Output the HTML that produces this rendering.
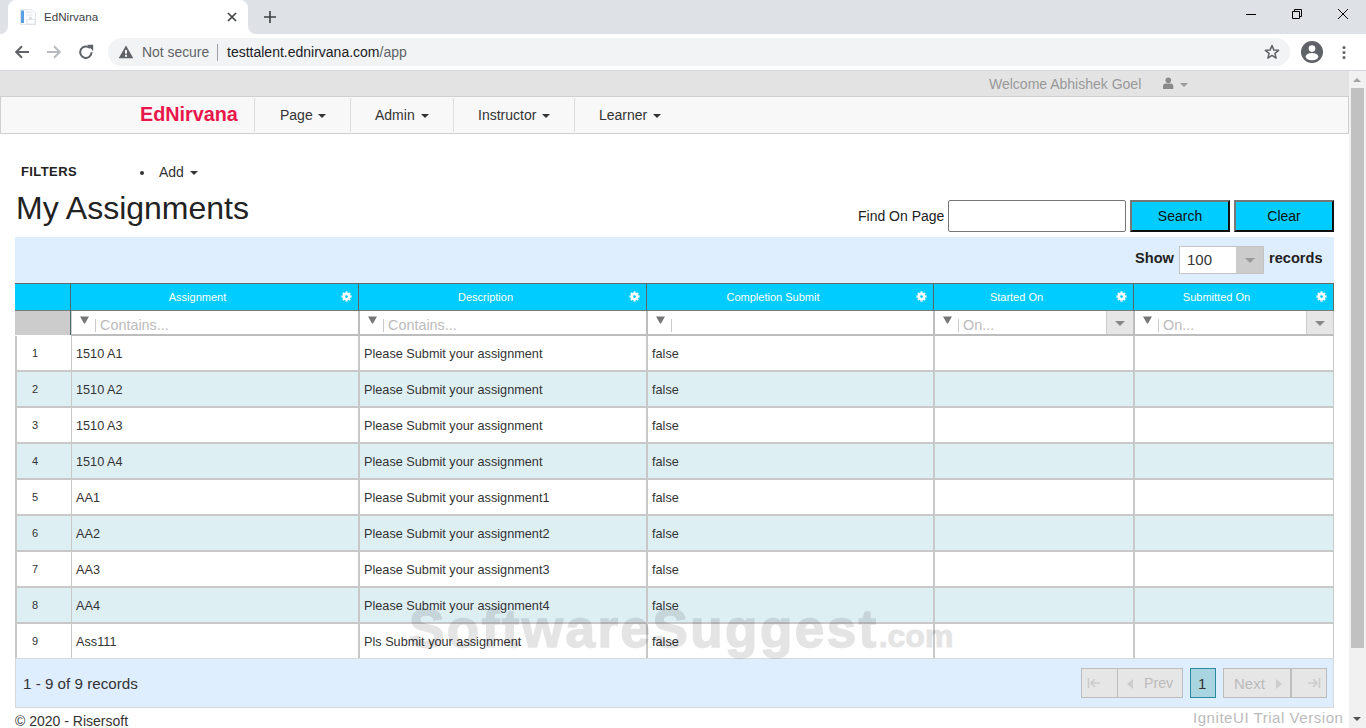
<!DOCTYPE html>
<html><head><meta charset="utf-8">
<style>
*{box-sizing:border-box;margin:0;padding:0}
html,body{width:1366px;height:728px;overflow:hidden;background:#fff;font-family:"Liberation Sans",sans-serif;position:relative}
.a{position:absolute}
.t{position:absolute;white-space:nowrap;line-height:1}
#tabstrip{left:0;top:0;width:1366px;height:34px;background:#DEE1E6}
#tab{left:8px;top:0;width:240px;height:34px;background:#fff;border-radius:8px 8px 0 0}
#toolbar{left:0;top:34px;width:1366px;height:36px;background:#fff}
#omni{left:108px;top:38px;width:1182px;height:28px;background:#F1F3F4;border-radius:14px}
</style></head>
<body>
<!-- Chrome UI -->
<div id="tabstrip" class="a"></div>
<div id="tab" class="a"></div>
<svg class="a" style="left:248px;top:26px" width="8" height="8"><path d="M0 0 V8 H8 A8 8 0 0 1 0 0Z" fill="#fff"/></svg>
<svg class="a" style="left:0px;top:26px" width="8" height="8"><path d="M8 0 V8 H0 A8 8 0 0 0 8 0Z" fill="#fff"/></svg>
<!-- favicon -->
<svg class="a" style="left:20px;top:9px" width="16" height="16" viewBox="0 0 16 16">
<path d="M0.5 0.5H12L15.5 4V15.5H0.5Z" fill="#fbfcfd" stroke="#dde1e5" stroke-width="0.8"/>
<rect x="1" y="1.5" width="3" height="12.5" fill="#5b9fe3"/>
<rect x="5.5" y="2.5" width="6" height="1.2" fill="#dfe8e8"/><rect x="6" y="5.5" width="6" height="1" fill="#e3e7ea"/><rect x="9" y="8.5" width="3" height="1" fill="#bfc4c8"/><rect x="7" y="10.5" width="8" height="4.5" fill="#fff" stroke="#d5dade" stroke-width="0.7"/>
</svg>
<div class="t" style="left:44px;top:11px;font-size:11.6px;color:#3c4043">EdNirvana</div>
<svg class="a" style="left:227px;top:12px" width="10" height="10" viewBox="0 0 10 10"><path d="M1 1L9 9M9 1L1 9" stroke="#3c4043" stroke-width="1.6"/></svg>
<svg class="a" style="left:264px;top:11px" width="12" height="12" viewBox="0 0 12 12"><path d="M6 0V12M0 6H12" stroke="#3c4043" stroke-width="1.6"/></svg>
<!-- window controls -->
<svg class="a" style="left:1246px;top:9px" width="11" height="11" viewBox="0 0 11 11"><path d="M0 5.5H10" stroke="#000" stroke-width="1"/></svg>
<svg class="a" style="left:1291px;top:8px" width="12" height="12" viewBox="0 0 12 12"><path d="M1.5 3.5H8.5V10.5H1.5Z M3.5 3.5V1.5H10.5V8.5H8.5" fill="none" stroke="#000" stroke-width="1"/></svg>
<svg class="a" style="left:1337px;top:8px" width="12" height="12" viewBox="0 0 12 12"><path d="M1 1L11 11M11 1L1 11" stroke="#000" stroke-width="1"/></svg>
<div id="toolbar" class="a"></div>
<!-- nav icons -->
<svg class="a" style="left:14px;top:44px" width="16" height="16" viewBox="0 0 16 16"><path d="M15 8H2.5M8 2.2L2.2 8L8 13.8" fill="none" stroke="#5f6368" stroke-width="2"/></svg>
<svg class="a" style="left:46px;top:44px" width="16" height="16" viewBox="0 0 16 16"><path d="M1 8H13.5M8 2.2L13.8 8L8 13.8" fill="none" stroke="#b9bbbe" stroke-width="2"/></svg>
<svg class="a" style="left:78px;top:44px" width="16" height="16" viewBox="0 0 16 16"><path d="M13.6 8.2A5.7 5.7 0 1 1 11.9 4.1" fill="none" stroke="#5f6368" stroke-width="2"/><path d="M9 0.8H15.2V7Z" fill="#5f6368"/></svg>
<div id="omni" class="a"></div>
<svg class="a" style="left:118px;top:45px" width="16" height="14" viewBox="0 0 16 14"><path d="M8 0.5L15.3 13.3H0.7Z" fill="#5f6368"/><rect x="7" y="5" width="2" height="3.6" fill="#f1f3f4"/><rect x="7" y="9.8" width="2" height="2" fill="#f1f3f4"/></svg>
<div class="t" style="left:142px;top:46px;font-size:13.9px;color:#5f6368">Not secure</div>
<div class="a" style="left:217px;top:44px;width:1px;height:17px;background:#9aa0a6"></div>
<div class="t" style="left:227px;top:45px;font-size:14px;color:#202124">testtalent.ednirvana.com<span style="color:#5f6368">/app</span></div>
<svg class="a" style="left:1264px;top:44px" width="16" height="16" viewBox="0 0 16 16"><path d="M8 1.5L9.9 6.1L14.6 6.3L10.9 9.3L12.1 14.1L8 11.4L3.9 14.1L5.1 9.3L1.4 6.3L6.1 6.1Z" fill="none" stroke="#5f6368" stroke-width="1.5" stroke-linejoin="round"/></svg>
<svg class="a" style="left:1301px;top:41px" width="22" height="22" viewBox="0 0 22 22"><circle cx="11" cy="11" r="11" fill="#5f6368"/><circle cx="11" cy="7.6" r="3.3" fill="#fff"/><ellipse cx="11" cy="15.6" rx="6.4" ry="3.6" fill="#fff"/></svg>
<svg class="a" style="left:1341px;top:44px" width="6" height="16" viewBox="0 0 6 16"><circle cx="3" cy="3.5" r="1.5" fill="#5f6368"/><circle cx="3" cy="8.5" r="1.5" fill="#5f6368"/><circle cx="3" cy="13.5" r="1.5" fill="#5f6368"/></svg>
<div class="a" style="left:0;top:70px;width:1366px;height:1px;background:#d4d7dc"></div>
<!-- Page -->
<div class="a" style="left:0;top:71px;width:1349px;height:25px;background:#E3E3E3"></div>
<div class="t" style="left:989px;top:77px;font-size:14px;color:#999">Welcome Abhishek Goel</div>
<svg class="a" style="left:1162px;top:77px" width="12" height="12" viewBox="0 0 12 12"><circle cx="6.3" cy="3.3" r="2.8" fill="#8a8a8a"/><path d="M1 12V9.3C1 7.5 2.2 6.6 3.6 6.6H8.8C10.2 6.6 11.3 7.5 11.3 9.3V12Z" fill="#8a8a8a"/></svg>
<div class="a" style="left:1180px;top:83px;width:0;height:0;border-left:4px solid transparent;border-right:4px solid transparent;border-top:4px solid #999"></div>
<!-- navbar -->
<div class="a" style="left:0;top:96px;width:1349px;height:38px;background:#F8F8F8;border:1px solid #cfcfcf"></div>
<div class="t" style="left:140px;top:105px;font-size:19.8px;font-weight:bold;color:#E8174B">EdNirvana</div>
<div class="a" style="left:254px;top:98px;width:1px;height:34px;background:#ddd"></div>
<div class="a" style="left:350px;top:98px;width:1px;height:34px;background:#ddd"></div>
<div class="a" style="left:453px;top:98px;width:1px;height:34px;background:#ddd"></div>
<div class="a" style="left:574px;top:98px;width:1px;height:34px;background:#ddd"></div>
<div class="t" style="left:280px;top:108px;font-size:14px;color:#333">Page</div>
<div class="a" style="left:318px;top:114px;border-left:4px solid transparent;border-right:4px solid transparent;border-top:4px solid #333"></div>
<div class="t" style="left:375px;top:108px;font-size:14px;color:#333">Admin</div>
<div class="a" style="left:421px;top:114px;border-left:4px solid transparent;border-right:4px solid transparent;border-top:4px solid #333"></div>
<div class="t" style="left:478px;top:108px;font-size:14px;color:#333">Instructor</div>
<div class="a" style="left:542px;top:114px;border-left:4px solid transparent;border-right:4px solid transparent;border-top:4px solid #333"></div>
<div class="t" style="left:599px;top:108px;font-size:14px;color:#333">Learner</div>
<div class="a" style="left:653px;top:114px;border-left:4px solid transparent;border-right:4px solid transparent;border-top:4px solid #333"></div>
<!-- filters -->
<div class="t" style="left:21px;top:165px;font-size:13px;font-weight:bold;color:#222;letter-spacing:0.4px">FILTERS</div>
<div class="a" style="left:140px;top:171px;width:4px;height:4px;border-radius:50%;background:#333"></div>
<div class="t" style="left:159px;top:165px;font-size:14px;color:#333">Add</div>
<div class="a" style="left:190px;top:171px;border-left:4px solid transparent;border-right:4px solid transparent;border-top:4px solid #333"></div>
<div class="t" style="left:16px;top:192px;font-size:32px;color:#222">My Assignments</div>
<div class="t" style="left:858px;top:209px;font-size:14px;color:#222">Find On Page</div>
<div class="a" style="left:948px;top:200px;width:178px;height:32px;border:1px solid #767676;border-radius:2px;background:#fff"></div>
<div class="a" style="left:1130px;top:200px;width:100px;height:32px;background:#00CCFF;border:2px solid;border-color:#767676 #111 #111 #767676"></div>
<div class="t" style="left:1130px;top:209px;width:100px;text-align:center;font-size:14px;color:#111">Search</div>
<div class="a" style="left:1234px;top:200px;width:100px;height:32px;background:#00CCFF;border:2px solid;border-color:#767676 #111 #111 #767676"></div>
<div class="t" style="left:1234px;top:209px;width:100px;text-align:center;font-size:14px;color:#111">Clear</div>
<div class="a" style="left:15px;top:237px;width:1319px;height:46px;background:#DFEEFE"></div>
<div class="t" style="left:1135px;top:251px;font-size:14.6px;font-weight:bold;color:#222">Show</div>
<div class="a" style="left:1179px;top:246px;width:85px;height:28px;background:#fff;border:1px solid #c4c4c4"></div>
<div class="a" style="left:1236px;top:247px;width:27px;height:26px;background:#cccccc"></div>
<div class="a" style="left:1245px;top:258px;border-left:5px solid transparent;border-right:5px solid transparent;border-top:5px solid #999"></div>
<div class="t" style="left:1187px;top:252px;font-size:15px;color:#333">100</div>
<div class="t" style="left:1269px;top:251px;font-size:14.6px;font-weight:bold;color:#222">records</div>
<div class="a" style="left:15px;top:283px;width:1319px;height:1px;background:#6a6a6a"></div>
<div class="a" style="left:15px;top:284px;width:1319px;height:26px;background:#00CCFF"></div>
<div class="a" style="left:15px;top:310px;width:1319px;height:1px;background:#7a7a7a"></div>
<div class="a" style="left:15px;top:311px;width:55px;height:24px;background:#cccccc"></div>
<div class="a" style="left:71px;top:311px;width:1263px;height:23px;background:#fff"></div>
<div class="a" style="left:71px;top:334px;width:1263px;height:2px;background:#bdbdbd"></div>
<div class="a" style="left:71px;top:311px;width:1px;height:23px;background:#d0d0d0"></div>
<div class="a" style="left:70px;top:283px;width:1px;height:52px;background:#4d6a70"></div>
<div class="t" style="left:54px;top:292px;width:287px;text-align:center;font-size:11px;color:#fff">Assignment</div>
<svg class="a" style="left:341px;top:291px" width="11" height="11" viewBox="0 0 12 12"><g fill="#fff"><circle cx="6" cy="6" r="4"/><rect x="4.8" y="0.5" width="2.4" height="11"/><rect x="0.5" y="4.8" width="11" height="2.4"/><rect x="4.8" y="0.5" width="2.4" height="11" transform="rotate(45 6 6)"/><rect x="4.8" y="0.5" width="2.4" height="11" transform="rotate(-45 6 6)"/></g><circle cx="6" cy="6" r="1.5" fill="#00CCFF"/></svg>
<svg class="a" style="left:80px;top:316px" width="9" height="8" viewBox="0 0 9 8"><path d="M0 0.5H9L5 7.5H4Z" fill="#777"/></svg>
<div class="a" style="left:95px;top:319px;width:1px;height:13px;background:#ccc"></div>
<div class="t" style="left:100px;top:318px;font-size:14.4px;color:#bbb">Contains...</div>
<div class="a" style="left:358px;top:283px;width:1px;height:28px;background:#56676b"></div>
<div class="a" style="left:358px;top:311px;width:2px;height:23px;background:#bdbdbd"></div>
<div class="t" style="left:342px;top:292px;width:287px;text-align:center;font-size:11px;color:#fff">Description</div>
<svg class="a" style="left:629px;top:291px" width="11" height="11" viewBox="0 0 12 12"><g fill="#fff"><circle cx="6" cy="6" r="4"/><rect x="4.8" y="0.5" width="2.4" height="11"/><rect x="0.5" y="4.8" width="11" height="2.4"/><rect x="4.8" y="0.5" width="2.4" height="11" transform="rotate(45 6 6)"/><rect x="4.8" y="0.5" width="2.4" height="11" transform="rotate(-45 6 6)"/></g><circle cx="6" cy="6" r="1.5" fill="#00CCFF"/></svg>
<svg class="a" style="left:368px;top:316px" width="9" height="8" viewBox="0 0 9 8"><path d="M0 0.5H9L5 7.5H4Z" fill="#777"/></svg>
<div class="a" style="left:383px;top:319px;width:1px;height:13px;background:#ccc"></div>
<div class="t" style="left:388px;top:318px;font-size:14.4px;color:#bbb">Contains...</div>
<div class="a" style="left:646px;top:283px;width:1px;height:28px;background:#56676b"></div>
<div class="a" style="left:646px;top:311px;width:2px;height:23px;background:#bdbdbd"></div>
<div class="t" style="left:630px;top:292px;width:286px;text-align:center;font-size:11px;color:#fff">Completion Submit</div>
<svg class="a" style="left:916px;top:291px" width="11" height="11" viewBox="0 0 12 12"><g fill="#fff"><circle cx="6" cy="6" r="4"/><rect x="4.8" y="0.5" width="2.4" height="11"/><rect x="0.5" y="4.8" width="11" height="2.4"/><rect x="4.8" y="0.5" width="2.4" height="11" transform="rotate(45 6 6)"/><rect x="4.8" y="0.5" width="2.4" height="11" transform="rotate(-45 6 6)"/></g><circle cx="6" cy="6" r="1.5" fill="#00CCFF"/></svg>
<svg class="a" style="left:656px;top:316px" width="9" height="8" viewBox="0 0 9 8"><path d="M0 0.5H9L5 7.5H4Z" fill="#777"/></svg>
<div class="a" style="left:671px;top:319px;width:1px;height:13px;background:#ccc"></div>
<div class="a" style="left:933px;top:283px;width:1px;height:28px;background:#56676b"></div>
<div class="a" style="left:933px;top:311px;width:2px;height:23px;background:#bdbdbd"></div>
<div class="t" style="left:917px;top:292px;width:199px;text-align:center;font-size:11px;color:#fff">Started On</div>
<svg class="a" style="left:1116px;top:291px" width="11" height="11" viewBox="0 0 12 12"><g fill="#fff"><circle cx="6" cy="6" r="4"/><rect x="4.8" y="0.5" width="2.4" height="11"/><rect x="0.5" y="4.8" width="11" height="2.4"/><rect x="4.8" y="0.5" width="2.4" height="11" transform="rotate(45 6 6)"/><rect x="4.8" y="0.5" width="2.4" height="11" transform="rotate(-45 6 6)"/></g><circle cx="6" cy="6" r="1.5" fill="#00CCFF"/></svg>
<svg class="a" style="left:943px;top:316px" width="9" height="8" viewBox="0 0 9 8"><path d="M0 0.5H9L5 7.5H4Z" fill="#777"/></svg>
<div class="a" style="left:958px;top:319px;width:1px;height:13px;background:#ccc"></div>
<div class="t" style="left:963px;top:318px;font-size:14.4px;color:#bbb">On...</div>
<div class="a" style="left:1106px;top:311px;width:27px;height:23px;background:#e6e6e6;border-left:1px solid #ccc"></div>
<div class="a" style="left:1115px;top:321px;border-left:5px solid transparent;border-right:5px solid transparent;border-top:5px solid #888"></div>
<div class="a" style="left:1133px;top:283px;width:1px;height:28px;background:#56676b"></div>
<div class="a" style="left:1133px;top:311px;width:2px;height:23px;background:#bdbdbd"></div>
<div class="t" style="left:1117px;top:292px;width:199px;text-align:center;font-size:11px;color:#fff">Submitted On</div>
<svg class="a" style="left:1316px;top:291px" width="11" height="11" viewBox="0 0 12 12"><g fill="#fff"><circle cx="6" cy="6" r="4"/><rect x="4.8" y="0.5" width="2.4" height="11"/><rect x="0.5" y="4.8" width="11" height="2.4"/><rect x="4.8" y="0.5" width="2.4" height="11" transform="rotate(45 6 6)"/><rect x="4.8" y="0.5" width="2.4" height="11" transform="rotate(-45 6 6)"/></g><circle cx="6" cy="6" r="1.5" fill="#00CCFF"/></svg>
<svg class="a" style="left:1143px;top:316px" width="9" height="8" viewBox="0 0 9 8"><path d="M0 0.5H9L5 7.5H4Z" fill="#777"/></svg>
<div class="a" style="left:1158px;top:319px;width:1px;height:13px;background:#ccc"></div>
<div class="t" style="left:1163px;top:318px;font-size:14.4px;color:#bbb">On...</div>
<div class="a" style="left:1306px;top:311px;width:27px;height:23px;background:#e6e6e6;border-left:1px solid #ccc"></div>
<div class="a" style="left:1315px;top:321px;border-left:5px solid transparent;border-right:5px solid transparent;border-top:5px solid #888"></div>
<div class="a" style="left:1333px;top:283px;width:1px;height:28px;background:#6a6a6a"></div>
<div class="a" style="left:1333px;top:311px;width:1px;height:24px;background:#c8c8c8"></div>
<div class="a" style="left:15px;top:336px;width:1319px;height:34px;background:#fff"></div>
<div class="a" style="left:15px;top:370px;width:1319px;height:2px;background:#c8c8c8"></div>
<div class="t" style="left:15px;top:348px;width:40px;text-align:center;font-size:11px;color:#333">1</div>
<div class="t" style="left:76px;top:348px;font-size:12.7px;color:#333">1510 A1</div>
<div class="t" style="left:364px;top:348px;font-size:12.7px;color:#333">Please Submit your assignment</div>
<div class="t" style="left:652px;top:348px;font-size:12.7px;color:#333">false</div>
<div class="a" style="left:15px;top:372px;width:1319px;height:34px;background:#DEEFF3"></div>
<div class="a" style="left:15px;top:406px;width:1319px;height:2px;background:#c8c8c8"></div>
<div class="t" style="left:15px;top:384px;width:40px;text-align:center;font-size:11px;color:#333">2</div>
<div class="t" style="left:76px;top:384px;font-size:12.7px;color:#333">1510 A2</div>
<div class="t" style="left:364px;top:384px;font-size:12.7px;color:#333">Please Submit your assignment</div>
<div class="t" style="left:652px;top:384px;font-size:12.7px;color:#333">false</div>
<div class="a" style="left:15px;top:408px;width:1319px;height:34px;background:#fff"></div>
<div class="a" style="left:15px;top:442px;width:1319px;height:2px;background:#c8c8c8"></div>
<div class="t" style="left:15px;top:420px;width:40px;text-align:center;font-size:11px;color:#333">3</div>
<div class="t" style="left:76px;top:420px;font-size:12.7px;color:#333">1510 A3</div>
<div class="t" style="left:364px;top:420px;font-size:12.7px;color:#333">Please Submit your assignment</div>
<div class="t" style="left:652px;top:420px;font-size:12.7px;color:#333">false</div>
<div class="a" style="left:15px;top:444px;width:1319px;height:34px;background:#DEEFF3"></div>
<div class="a" style="left:15px;top:478px;width:1319px;height:2px;background:#c8c8c8"></div>
<div class="t" style="left:15px;top:456px;width:40px;text-align:center;font-size:11px;color:#333">4</div>
<div class="t" style="left:76px;top:456px;font-size:12.7px;color:#333">1510 A4</div>
<div class="t" style="left:364px;top:456px;font-size:12.7px;color:#333">Please Submit your assignment</div>
<div class="t" style="left:652px;top:456px;font-size:12.7px;color:#333">false</div>
<div class="a" style="left:15px;top:480px;width:1319px;height:34px;background:#fff"></div>
<div class="a" style="left:15px;top:514px;width:1319px;height:2px;background:#c8c8c8"></div>
<div class="t" style="left:15px;top:492px;width:40px;text-align:center;font-size:11px;color:#333">5</div>
<div class="t" style="left:76px;top:492px;font-size:12.7px;color:#333">AA1</div>
<div class="t" style="left:364px;top:492px;font-size:12.7px;color:#333">Please Submit your assignment1</div>
<div class="t" style="left:652px;top:492px;font-size:12.7px;color:#333">false</div>
<div class="a" style="left:15px;top:516px;width:1319px;height:34px;background:#DEEFF3"></div>
<div class="a" style="left:15px;top:550px;width:1319px;height:2px;background:#c8c8c8"></div>
<div class="t" style="left:15px;top:528px;width:40px;text-align:center;font-size:11px;color:#333">6</div>
<div class="t" style="left:76px;top:528px;font-size:12.7px;color:#333">AA2</div>
<div class="t" style="left:364px;top:528px;font-size:12.7px;color:#333">Please Submit your assignment2</div>
<div class="t" style="left:652px;top:528px;font-size:12.7px;color:#333">false</div>
<div class="a" style="left:15px;top:552px;width:1319px;height:34px;background:#fff"></div>
<div class="a" style="left:15px;top:586px;width:1319px;height:2px;background:#c8c8c8"></div>
<div class="t" style="left:15px;top:564px;width:40px;text-align:center;font-size:11px;color:#333">7</div>
<div class="t" style="left:76px;top:564px;font-size:12.7px;color:#333">AA3</div>
<div class="t" style="left:364px;top:564px;font-size:12.7px;color:#333">Please Submit your assignment3</div>
<div class="t" style="left:652px;top:564px;font-size:12.7px;color:#333">false</div>
<div class="a" style="left:15px;top:588px;width:1319px;height:34px;background:#DEEFF3"></div>
<div class="a" style="left:15px;top:622px;width:1319px;height:2px;background:#c8c8c8"></div>
<div class="t" style="left:15px;top:600px;width:40px;text-align:center;font-size:11px;color:#333">8</div>
<div class="t" style="left:76px;top:600px;font-size:12.7px;color:#333">AA4</div>
<div class="t" style="left:364px;top:600px;font-size:12.7px;color:#333">Please Submit your assignment4</div>
<div class="t" style="left:652px;top:600px;font-size:12.7px;color:#333">false</div>
<div class="a" style="left:15px;top:624px;width:1319px;height:34px;background:#fff"></div>
<div class="t" style="left:15px;top:636px;width:40px;text-align:center;font-size:11px;color:#333">9</div>
<div class="t" style="left:76px;top:636px;font-size:12.7px;color:#333">Ass111</div>
<div class="t" style="left:364px;top:636px;font-size:12.7px;color:#333">Pls Submit your assignment</div>
<div class="t" style="left:652px;top:636px;font-size:12.7px;color:#333">false</div>
<div class="a" style="left:15px;top:336px;width:2px;height:322px;background:#c8c8c8"></div>
<div class="a" style="left:71px;top:336px;width:1px;height:322px;background:#c8c8c8"></div>
<div class="a" style="left:358px;top:336px;width:2px;height:322px;background:#c8c8c8"></div>
<div class="a" style="left:646px;top:336px;width:2px;height:322px;background:#c8c8c8"></div>
<div class="a" style="left:933px;top:336px;width:2px;height:322px;background:#c8c8c8"></div>
<div class="a" style="left:1133px;top:336px;width:2px;height:322px;background:#c8c8c8"></div>
<div class="a" style="left:1333px;top:336px;width:1px;height:322px;background:#c8c8c8"></div>
<div class="a" style="left:15px;top:658px;width:1319px;height:50px;background:#DFEEFE;border:1px solid #d8d8d8"></div>
<div class="t" style="left:23px;top:676px;font-size:15.2px;color:#333">1 - 9 of 9 records</div>
<div class="a" style="left:1081px;top:668px;width:37px;height:30px;background:#E6E6E6;border:1px solid #bdbdbd"></div>
<div class="a" style="left:1117px;top:668px;width:2px;height:30px;background:#bdbdbd"></div>
<div class="a" style="left:1117px;top:668px;width:66px;height:30px;background:#E6E6E6;border:1px solid #bdbdbd"></div>
<div class="a" style="left:1190px;top:668px;width:26px;height:30px;background:#A8D5E0;border:1px solid #2C8A9E"></div>
<div class="a" style="left:1223px;top:668px;width:68px;height:30px;background:#E6E6E6;border:1px solid #bdbdbd"></div>
<div class="a" style="left:1290px;top:668px;width:37px;height:30px;background:#E6E6E6;border:1px solid #bdbdbd"></div>
<div class="a" style="left:1290px;top:668px;width:2px;height:30px;background:#bdbdbd"></div>
<div class="t" style="left:1144px;top:676px;font-size:14.2px;color:#bbb">Prev</div>
<div class="t" style="left:1234px;top:676px;font-size:15px;color:#bbb">Next</div>
<div class="t" style="left:1198px;top:676px;font-size:15px;color:#333">1</div>
<div class="a" style="left:1127px;top:679px;border-top:5px solid transparent;border-bottom:5px solid transparent;border-right:6px solid #ccc"></div>
<div class="a" style="left:1276px;top:679px;border-top:5px solid transparent;border-bottom:5px solid transparent;border-left:6px solid #ccc"></div>
<svg class="a" style="left:1087px;top:676px" width="14" height="14" viewBox="0 0 14 14"><path d="M1.5 2V12M13 7H4M8 3L4 7L8 11" fill="none" stroke="#ccc" stroke-width="1.6"/></svg>
<svg class="a" style="left:1307px;top:676px" width="14" height="14" viewBox="0 0 14 14"><path d="M12.5 2V12M1 7H10M6 3L10 7L6 11" fill="none" stroke="#ccc" stroke-width="1.6"/></svg>
<div class="t" style="left:15px;top:714px;font-size:14px;color:#333">&copy; 2020 - Risersoft</div>
<div class="t" style="left:1193px;top:710px;font-size:15px;letter-spacing:0.55px;color:#bbb">IgniteUI Trial Version</div>
<div class="t" style="left:409px;top:602px;font-size:53px;letter-spacing:2.45px;font-weight:bold;color:#000;opacity:0.1;-webkit-text-stroke:1.6px #000">SoftwareSuggest<span style="font-size:32px;letter-spacing:0;-webkit-text-stroke:1px #000">.com</span></div>
<div class="a" style="left:1349px;top:71px;width:17px;height:657px;background:#F1F1F1"></div>
<div class="a" style="left:1351px;top:88px;width:13px;height:560px;background:#C1C1C1"></div>
<div class="a" style="left:1353px;top:78px;border-left:4px solid transparent;border-right:4px solid transparent;border-bottom:4px solid #a3a3a3"></div>
<div class="a" style="left:1353px;top:717px;border-left:4px solid transparent;border-right:4px solid transparent;border-top:4px solid #505050"></div>
</body></html>
